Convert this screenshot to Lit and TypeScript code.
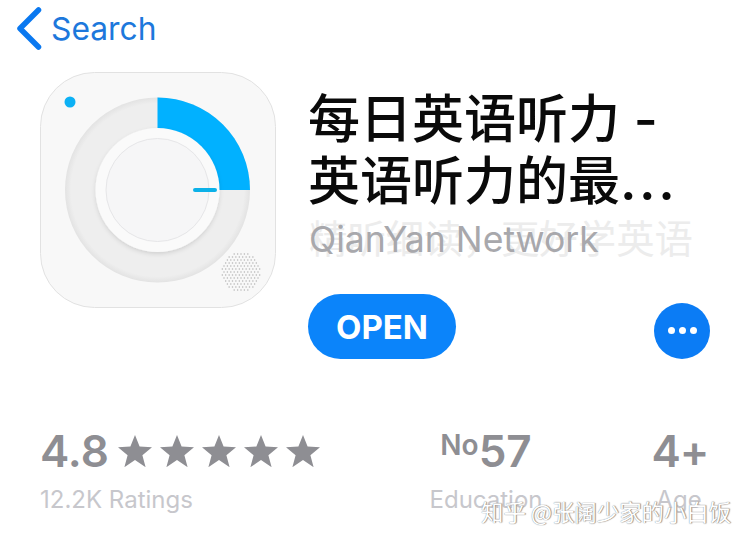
import { LitElement, html, css, svg } from "lit";
import { customElement } from "lit/decorators.js";

const grille = () => {
  const out = [];
  for (let r = -6; r <= 6; r++) {
    const yy = r * 3;
    for (let c = -7; c <= 7; c++) {
      const xx = c * 3.4 + (r % 2 ? 1.7 : 0);
      if (xx * xx + yy * yy <= 19.5 * 19.5) out.push(svg`<circle cx=${241 + xx} cy=${272 + yy} r="0.75" fill="#b4b4b4"/>`);
    }
  }
  return out;
};

const star = html`<svg class="star" viewBox="0 0 34 32"><path d="M17 0l4.600 11.600 12.400.7-9.600 7.900 3.200 12L17 25l-10.600 7.200 3.200-12L0 12.300l12.400-.7z" fill="#8e8e93"/></svg>`;

@customElement("app-root")
export class AppRoot extends LitElement {
  static styles = css`
    :host { display: block; width: 750px; height: 543px; background: #fff; overflow: hidden; position: relative; font-family: Inter, "Noto Sans CJK SC", sans-serif; }
    .back { display: flex; align-items: center; gap: 9px; height: 57px; padding-left: 15px; padding-bottom: 1px; box-sizing: border-box; color: #1d78dc; font-size: 31.800px; }
    .chev { width: 27px; height: 44px; }
    .hero { display: flex; height: 290px; padding-left: 40px; padding-top: 15px; gap: 33px; }
    .appicon { width: 236px; height: 236px; flex: none; }
    .info { flex: 1; display: flex; flex-direction: column; }
    .title { font-family: Inter, "Noto Sans CJK SC", sans-serif; font-weight: 500; font-size: 52px; line-height: 61.500px; color: #0a0a0a; margin-top: 17px; white-space: nowrap; margin-left: -1px; }
    .dots { letter-spacing: 2.500px; font-weight: 600; }
    .sub { position: relative; height: 48px; margin-top: 4px; }
    .ghost { position: absolute; left: 0; top: -4px; font-family: "Noto Sans CJK SC", sans-serif; font-size: 38.400px; line-height: 48px; color: #ececec; white-space: nowrap; }
    .dev { position: absolute; left: 0; top: 0; font-size: 35.600px; line-height: 48px; color: #a8a8ac; white-space: nowrap; }
    .actions { display: flex; align-items: center; justify-content: space-between; margin-top: 30px; padding-right: 40px; }
    .open { width: 148px; height: 65px; border-radius: 33px; background: #0b84fa; color: #fff; font-weight: 700; font-size: 33px; display: flex; align-items: center; justify-content: center; margin-left: -1px; }
    .more { width: 56px; height: 56px; border-radius: 50%; background: #0b7cf5; display: flex; align-items: center; justify-content: center; gap: 4px; margin-top: 8px; }
    .more i { width: 7px; height: 7px; border-radius: 50%; background: #fff; }
    .stats { display: flex; padding-top: 64px; padding-left: 40px; color: #8e8e93; }
    .stat { display: flex; flex-direction: column; }
    .big { font-size: 44px; line-height: 50px; font-weight: 600; white-space: nowrap; display: flex; align-items: center; }
    .small { font-size: 24px; line-height: 28px; color: #c7c7cc; margin-top: 10px; white-space: nowrap; }
    .stars { display: flex; gap: 8px; margin-left: 9px; }
    .star { width: 34px; height: 32px; display: block; }
    .rating { width: 391px; }
    .rank { width: 110px; align-items: center; }
    .age { width: 52px; align-items: center; margin-left: 112px; }
    .plus { letter-spacing: -1px; margin-left: 2px; }
    .no { font-size: 28px; line-height: 50px; align-self: flex-start; margin-top: -6px; font-weight: 600; }
    .wm { position: absolute; left: 481px; top: 494px; font-family: "Noto Sans CJK SC", sans-serif; font-size: 22.400px; line-height: 34px; color: #fff; white-space: nowrap; text-shadow: 0 0 1px #777, 1px 0 1px #999; }
  `;

  render() {
    return html`
      <div class="back">
        <svg class="chev" viewBox="0 0 27 44"><path d="M23.500 4L5 22.500 23.500 41" fill="none" stroke="#0a78f0" stroke-width="5.500" stroke-linecap="round" stroke-linejoin="round"/></svg>
        <span>Search</span>
      </div>
      <div class="hero">
        <svg class="appicon" viewBox="40 72 236 236">
          <defs>
            <radialGradient id="ringShade" gradientUnits="userSpaceOnUse" cx="157.500" cy="190" r="93">
              <stop offset="0.93" stop-color="#eeeeee"/><stop offset="1" stop-color="#e2e2e2"/>
            </radialGradient>
            <filter id="knobShadow" x="-20%" y="-20%" width="140%" height="140%"><feDropShadow dx="0" dy="2" stdDeviation="2" flood-color="#000" flood-opacity="0.12"/></filter>
          </defs>
          <rect x="40.500" y="72.500" width="235" height="235" rx="54" fill="#f8f8f8" stroke="#e2e2e2"/>
          <circle cx="70" cy="102" r="5.500" fill="#0cb1f5"/>
          <circle cx="157.500" cy="190" r="92.500" fill="url(#ringShade)"/>
          <path d="M157.500 97.500A92.500 92.500 0 0 1 250 190H157.500Z" fill="#01b1ff"/>
          <circle cx="157.500" cy="190" r="62" fill="#fafafa" filter="url(#knobShadow)"/>
          <circle cx="157.500" cy="190" r="51.500" fill="#f6f6f7" stroke="#e6e6e8"/>
          <rect x="193" y="188" width="24" height="4" rx="2" fill="#0cb1e8"/>
          ${grille()}
        </svg>
        <div class="info">
          <div class="title">每日英语听力 -<br />英语听力的最<span class="dots">...</span></div>
          <div class="sub">
            <span class="ghost">精听细读，更好学英语</span>
            <span class="dev">QianYan Network</span>
          </div>
          <div class="actions">
            <div class="open">OPEN</div>
            <div class="more"><i></i><i></i><i></i></div>
          </div>
        </div>
      </div>
      <div class="stats">
        <div class="stat rating">
          <div class="big">4.8<span class="stars">${star}${star}${star}${star}${star}</span></div>
          <div class="small">12.2K Ratings</div>
        </div>
        <div class="stat rank">
          <div class="big"><span class="no">No</span>57</div>
          <div class="small">Education</div>
        </div>
        <div class="stat age">
          <div class="big"><span class="plus">4+</span></div>
          <div class="small">Age</div>
        </div>
      </div>
      <div class="wm">知乎 @张阔少家的小白饭</div>
    `;
  }
}
